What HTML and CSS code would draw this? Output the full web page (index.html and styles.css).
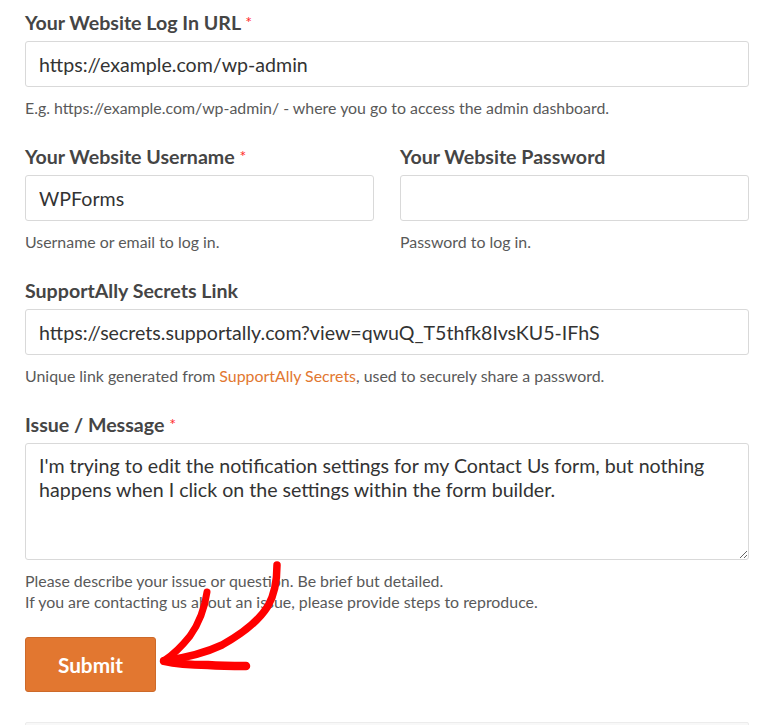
FILE: index.html
```html
<!DOCTYPE html>
<html lang="en">
<head>
<meta charset="utf-8">
<title>Support Form</title>
<link rel="stylesheet" href="styles.css">
</head>
<body>
<div class="page">
  <form class="form">
    <div class="field">
      <label class="label">Your Website Log In URL <span class="req">*</span></label>
      <input class="input" type="text" value="https://example.com/wp-admin">
      <div class="help">E.g. https://example.com/wp-admin/ - where you go to access the admin dashboard.</div>
    </div>
    <div class="field row">
      <div class="col">
        <label class="label">Your Website Username <span class="req">*</span></label>
        <input class="input" type="text" value="WPForms">
        <div class="help">Username or email to log in.</div>
      </div>
      <div class="col">
        <label class="label">Your Website Password</label>
        <input class="input" type="password" value="">
        <div class="help">Password to log in.</div>
      </div>
    </div>
    <div class="field">
      <label class="label">SupportAlly Secrets Link</label>
      <input class="input" type="text" value="https://secrets.supportally.com?view=qwuQ_T5thfk8IvsKU5-IFhS">
      <div class="help">Unique link generated from <a class="link" href="#">SupportAlly Secrets</a>, used to securely share a password.</div>
    </div>
    <div class="field">
      <label class="label">Issue / Message <span class="req">*</span></label>
      <textarea class="textarea">I'm trying to edit the notification settings for my Contact Us form, but nothing happens when I click on the settings within the form builder.</textarea>
      <div class="help">Please describe your issue or question. Be brief but detailed.<br>If you are contacting us about an issue, please provide steps to reproduce.</div>
    </div>
    <div class="actions">
      <button class="submit" type="button">Submit</button>
    </div>
    <div class="footer-box"></div>
  </form>
  <svg class="arrow" width="768" height="725" viewBox="0 0 768 725" aria-hidden="true">
    <g fill="none" stroke="#ff0000" stroke-linecap="round" stroke-linejoin="round">
      <path stroke-width="7.5" d="M277,565 C277,578 276,592 268,606 C258,622 242,634 222,645 C203,654 184,658 164,661"/>
      <path stroke-width="7" d="M207,592 C205,606 200,622 190,636 C182,646 174,654 165,660"/>
      <path stroke-width="8.5" d="M164,661 C176,664 192,665 208,665 C222,666 236,666 246,666"/>
    </g>
  </svg>
</div>
</body>
</html>
```

FILE: styles.css
```css
html, body {
  margin: 0;
  padding: 0;
  background: #ffffff;
}

body {
  font-family: Lato, "Open Sans", "Liberation Sans", sans-serif;
  color: #444444;
}

.page {
  position: relative;
  width: 768px;
  height: 725px;
  overflow: hidden;
}

.form {
  width: 724px;
  margin: 0 0 0 25px;
  padding-top: 11px;
}

.field {
  margin-bottom: 27px;
}

.row {
  display: grid;
  grid-template-columns: 1fr 1fr;
  column-gap: 26px;
}

.label {
  display: block;
  height: 24px;
  font-size: 19.6px;
  line-height: 24px;
  font-weight: 700;
  color: #454545;
  margin-bottom: 6px;
}

.req {
  color: #ff2a2a;
  font-weight: 400;
  font-size: 16px;
  line-height: 0;
  vertical-align: 2px;
}

.input,
.textarea {
  display: block;
  box-sizing: border-box;
  width: 100%;
  border: 1px solid #d9d9d9;
  border-radius: 3px;
  background: #ffffff;
  font-family: Lato, "Open Sans", "Liberation Sans", sans-serif;
  font-size: 19.6px;
  color: #333333;
  margin: 0;
  outline: none;
}

.input {
  height: 46px;
  padding: 0 13px;
}

.textarea {
  height: 117px;
  padding: 10px 13px;
  line-height: 24px;
  resize: vertical;
}

.help {
  margin-top: 10px;
  font-size: 15.9px;
  line-height: 21px;
  color: #595959;
}

.link {
  color: #e27730;
  text-decoration: none;
}

.actions {
  margin-top: -2px;
}

.submit {
  display: block;
  width: 131px;
  height: 55px;
  background: #e27730;
  border: 1px solid #cd6a2a;
  border-radius: 3px;
  color: #ffffff;
  font-family: Lato, "Open Sans", "Liberation Sans", sans-serif;
  font-size: 20.8px;
  font-weight: 700;
  padding: 0;
  cursor: pointer;
}

.footer-box {
  margin-top: 30px;
  height: 30px;
  background: #f8f8f8;
  border: 1px solid #ececec;
  border-radius: 2px;
}

.arrow {
  position: absolute;
  left: 0;
  top: 0;
  pointer-events: none;
}
```
